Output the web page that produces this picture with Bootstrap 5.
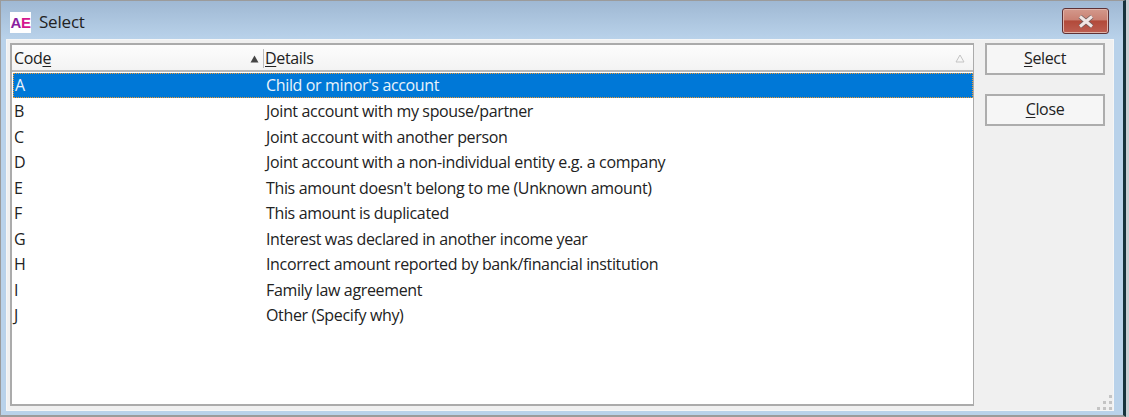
<!DOCTYPE html>
<html lang="en"><head><meta charset="utf-8"><title>Select</title>
<link href="https://cdn.jsdelivr.net/npm/bootstrap@5.3.0/dist/css/bootstrap.min.css" rel="stylesheet">
<style>
html,body{height:100%;overflow:hidden;background:#c9ced3}
body{font-family:"Open Sans","Liberation Sans",sans-serif;color:#222;font-size:16px;letter-spacing:-.35px;line-height:1.2}
.win{width:1126px;height:417px;border:solid #9b9b9b;border-width:1px 0 2px 1px;border-right:3px solid #16323c;background:linear-gradient(#9fb8d3 0,#b9d2ea 38px,#b9d2ea 100%);padding:0 9px 5px 5px;position:relative}
.tbar{height:38px;padding:5px 0 0 4px}
.appicon{width:21px;height:21px;background:#fff;color:#8a1fa0;font:700 15px/21px "Liberation Sans",sans-serif;letter-spacing:-.5px;text-align:center}
.appicon b{color:#d5188f;font-weight:700}
.ttl{font-size:17px;margin-left:8px;letter-spacing:-.2px}
.xbtn{position:absolute;right:14px;top:7px;width:47px;height:26px;border:1px solid #5e3236;border-radius:3px;background:linear-gradient(#d3998c 0,#c98072 45%,#b24a3a 50%,#bd5f52 100%);box-shadow:inset 0 0 0 1px #dfb4aa}
.pane{height:372px;background:#f0f0f0;border:1px solid #f6f6f6;padding:3px 8px 5px 3px;gap:11px}
.lst{width:965px;height:363px;background:#fff;border:2px solid #ababab;border-right-width:1px;border-bottom-width:2px;overflow:hidden}
.hdr{height:27px;padding-top:2px;background:linear-gradient(#fdfdfd,#f3f3f3);border-bottom:2px solid #b9b9b9}
.c1{width:251px;padding-left:2px}
.c2{flex:1;padding-left:1px}
.sep{border-left:1px solid #bdbdbd;height:19px}
.tri{flex:none;margin-left:auto}
.rw{height:25.5px;padding-left:2px;display:flex;align-items:center;position:relative;top:1px}
.rw .c1{padding-left:0;width:252px}
.rw .c2{padding-left:0}
.rw.sel{background:#0078d7;color:#e9f3fb;border:1px dotted #f09a30;margin:1px 0 0 1px;height:25px;padding-left:1px;top:0}
.rw.sel .c1{width:251px}
.pbtn{width:120px;height:32px;border:2px solid #adadad;background:#f6f6f6;color:#222;font-size:16px;letter-spacing:-.35px;padding:0 0 2px;border-radius:0}
.pbtn:hover{background:#f6f6f6;border-color:#adadad}
.btncol{gap:19px}
.grip{position:absolute;right:10px;bottom:5px}
u{text-underline-offset:2px}
</style></head><body>
<div class="win">
 <div class="tbar d-flex align-items-center">
  <div class="appicon">A<b>E</b></div><div class="ttl">Select</div>
 </div>
 <div class="xbtn d-flex align-items-center justify-content-center"><svg width="18" height="13" viewBox="0 0 18 13"><path d="M3 1.5l12 10M15 1.5l-12 10" stroke="#6d5c5c" stroke-width="4.5"/><path d="M3 1.5l12 10M15 1.5l-12 10" stroke="#f1e6e4" stroke-width="3"/></svg></div>
 <div class="pane d-flex">
  <div class="lst">
   <div class="hdr d-flex align-items-center">
    <div class="c1 d-flex align-items-center">Cod<u>e</u><svg class="tri me-1" width="9" height="8" viewBox="0 0 9 8"><path d="M4.5 .5L8.5 7.5H.5Z" fill="#444"/></svg></div>
    <div class="sep"></div>
    <div class="c2 d-flex align-items-center"><span><u>D</u>etails</span><svg class="tri me-2" width="10" height="9" viewBox="0 0 10 9"><path d="M5 1L9 8H1Z" fill="none" stroke="#c4c4c4"/></svg></div>
   </div>
   <div class="rw sel"><div class="c1">A</div><div class="c2">Child or minor's account</div></div>
   <div class="rw"><div class="c1">B</div><div class="c2">Joint account with my spouse/partner</div></div>
   <div class="rw"><div class="c1">C</div><div class="c2">Joint account with another person</div></div>
   <div class="rw"><div class="c1">D</div><div class="c2">Joint account with a non-individual entity e.g. a company</div></div>
   <div class="rw"><div class="c1">E</div><div class="c2">This amount doesn't belong to me (Unknown amount)</div></div>
   <div class="rw"><div class="c1">F</div><div class="c2">This amount is duplicated</div></div>
   <div class="rw"><div class="c1">G</div><div class="c2">Interest was declared in another income year</div></div>
   <div class="rw"><div class="c1">H</div><div class="c2">Incorrect amount reported by bank/financial institution</div></div>
   <div class="rw"><div class="c1">I</div><div class="c2">Family law agreement</div></div>
   <div class="rw"><div class="c1">J</div><div class="c2">Other (Specify why)</div></div>
  </div>
  <div class="d-flex flex-column btncol">
   <button class="btn pbtn" type="button"><u>S</u>elect</button>
   <button class="btn pbtn" type="button"><u>C</u>lose</button>
  </div>
 </div>
 <svg class="grip" width="16" height="16" viewBox="0 0 16 16" fill="#c4c4c4"><rect x="12" y="1" width="3" height="3"/><rect x="6" y="7" width="3" height="3"/><rect x="12" y="7" width="3" height="3"/><rect x="0" y="13" width="3" height="3"/><rect x="6" y="13" width="3" height="3"/><rect x="12" y="13" width="3" height="3"/></svg>
</div>
<script src="https://cdn.jsdelivr.net/npm/bootstrap@5.3.0/dist/js/bootstrap.bundle.min.js"></script>
</body></html>
